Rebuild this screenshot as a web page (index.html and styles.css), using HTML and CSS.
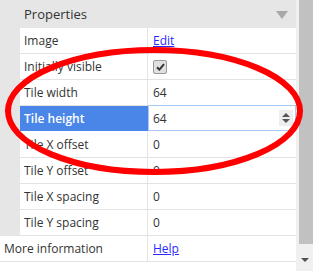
FILE: index.html
```html
<!DOCTYPE html>
<html>
<head>
<meta charset="utf-8">
<link rel="stylesheet" href="styles.css">
</head>
<body>
<div class="frame">
  <div class="panel">
    <div class="header">
      <span class="title">Properties</span>
      <span class="caret"></span>
    </div>
    <div class="group">
      <div class="row"><div class="label">Image</div><div class="value"><a class="link">Edit</a></div></div>
      <div class="row"><div class="label">Initially visible</div><div class="value"><span class="check"><svg width="9" height="8" viewBox="0 0 9 8"><path d="M1 4.2 L3.4 6.6 L8 1.2" fill="none" stroke="#333" stroke-width="2"/></svg></span></div></div>
      <div class="row"><div class="label">Tile width</div><div class="value">64</div></div>
      <div class="row selected"><div class="label">Tile height</div><div class="value editing"><span>64</span><span class="spin"><svg width="10" height="12" viewBox="0 0 10 12"><path d="M1 5 L5 1 L9 5 Z M1 7 L5 11 L9 7 Z" fill="#555"/></svg></span></div></div>
      <div class="row"><div class="label">Tile X offset</div><div class="value">0</div></div>
      <div class="row"><div class="label">Tile Y offset</div><div class="value">0</div></div>
      <div class="row"><div class="label">Tile X spacing</div><div class="value">0</div></div>
      <div class="row"><div class="label">Tile Y spacing</div><div class="value">0</div></div>
    </div>
    <div class="row top"><div class="label wide">More information</div><div class="value"><a class="link">Help</a></div></div>
  </div>
  <div class="scrollbar">
    <div class="thumb"></div>
    <div class="down"></div>
  </div>
  <svg class="mark" width="313" height="271" viewBox="0 0 313 271">
    <ellipse cx="154" cy="111" rx="146" ry="61" fill="none" stroke="#ff0000" stroke-width="6"/>
  </svg>
</div>
</body>
</html>
```
FILE: styles.css
```css
html, body {
  margin: 0;
  padding: 0;
  background: #ffffff;
}
.frame {
  position: relative;
  width: 313px;
  height: 271px;
  overflow: hidden;
  display: flex;
  font-family: "Open Sans", "Noto Sans", sans-serif;
  font-size: 12px;
  color: #333333;
}
.panel {
  width: 296px;
  display: flex;
  flex-direction: column;
}
.header {
  height: 28px;
  background: #e6e6e6;
  display: flex;
  align-items: center;
  justify-content: space-between;
  padding: 0 8px 0 24px;
  box-sizing: border-box;
  font-size: 13px;
}
.caret {
  width: 0;
  height: 0;
  border-left: 6px solid transparent;
  border-right: 6px solid transparent;
  border-top: 8px solid #a8a8a8;
  margin-top: 2px;
}
.group {
  padding-left: 20px;
  background: #e6e6e6;
}
.row {
  display: flex;
  height: 26px;
  box-sizing: border-box;
  border-bottom: 1px solid #e3e3e3;
  background: #ffffff;
}
.label {
  width: 128px;
  padding-left: 4px;
  box-sizing: border-box;
  border-right: 1px solid #e3e3e3;
  display: flex;
  align-items: center;
  white-space: nowrap;
}
.label.wide {
  width: 148px;
}
.value {
  flex: 1;
  display: flex;
  align-items: center;
  padding-left: 5px;
}
.link {
  color: #2a2aff;
  text-decoration: underline;
}
.check {
  width: 12px;
  height: 12px;
  border: 1px solid #9a9a9a;
  border-radius: 2px;
  background: #e0e0e0;
  display: flex;
  align-items: center;
  justify-content: center;
}
.selected .label {
  background: #4a86e8;
  color: #ffffff;
  font-weight: 600;
  border-right: none;
}
.row.selected {
  border-bottom-color: #ffffff;
}
.value.editing {
  border: 1px solid #a8c8f5;
  margin: -1px 0 0 0;
  height: 26px;
  box-sizing: border-box;
  justify-content: space-between;
  padding-left: 4px;
  padding-right: 2px;
}
.spin {
  width: 14px;
  height: 16px;
  background: #eeeeee;
  display: flex;
  align-items: center;
  justify-content: center;
}
.scrollbar {
  width: 17px;
  background: #f0f0f0;
  display: flex;
  flex-direction: column;
  align-items: center;
}
.thumb {
  width: 14px;
  height: 244px;
  background: #c1c1c1;
  margin-left: 2px;
}
.down {
  margin-top: 14px;
  width: 0;
  height: 0;
  border-left: 4px solid transparent;
  border-right: 4px solid transparent;
  border-top: 4px solid #505050;
}
.mark {
  position: absolute;
  left: 0;
  top: 0;
  pointer-events: none;
}
```
